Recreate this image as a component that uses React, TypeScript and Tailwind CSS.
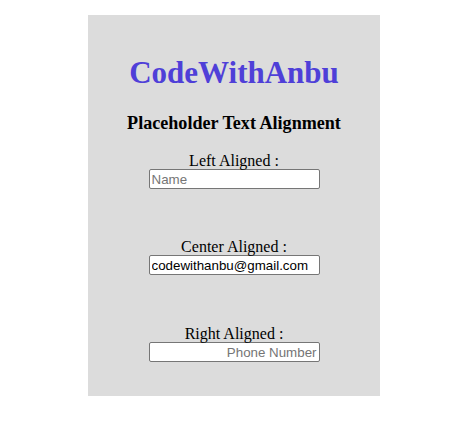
const serif = "font-['Liberation_Serif','Times_New_Roman',serif]";
const inputCls =
  "block mx-auto w-[171px] h-[20px] px-[2px] bg-white border border-[#767676] rounded-[2px] text-[13.33px] text-black font-['Liberation_Sans',Arial,sans-serif] placeholder:text-[#757575] outline-none";

const App = () => {
  return (
    <div className="w-[474px] h-[443px] bg-white">
      <div className={`ml-[88px] mt-[15px] inline-block w-[292px] h-[381px] bg-[#dcdcdc] text-center ${serif}`}>
        <h1 className="mt-[40px] text-[31px] leading-[35px] font-bold text-[#4f3fd8]">CodeWithAnbu</h1>
        <h3 className="mt-[22px] text-[18.1px] leading-[22px] font-bold text-black">Placeholder Text Alignment</h3>

        <div className="mt-[18px] text-[16px] leading-[17px] text-black">Left Aligned :</div>
        <input className={`${inputCls} text-left`} placeholder="Name" readOnly />

        <div className="mt-[49px] text-[16px] leading-[17px] text-black">Center Aligned :</div>
        <input className={`${inputCls} text-left`} defaultValue="codewithanbu@gmail.com" />

        <div className="mt-[50px] text-[16px] leading-[17px] text-black">Right Aligned :</div>
        <input className={`${inputCls} text-right`} placeholder="Phone Number" readOnly />
      </div>
    </div>
  );
};

export default App;
